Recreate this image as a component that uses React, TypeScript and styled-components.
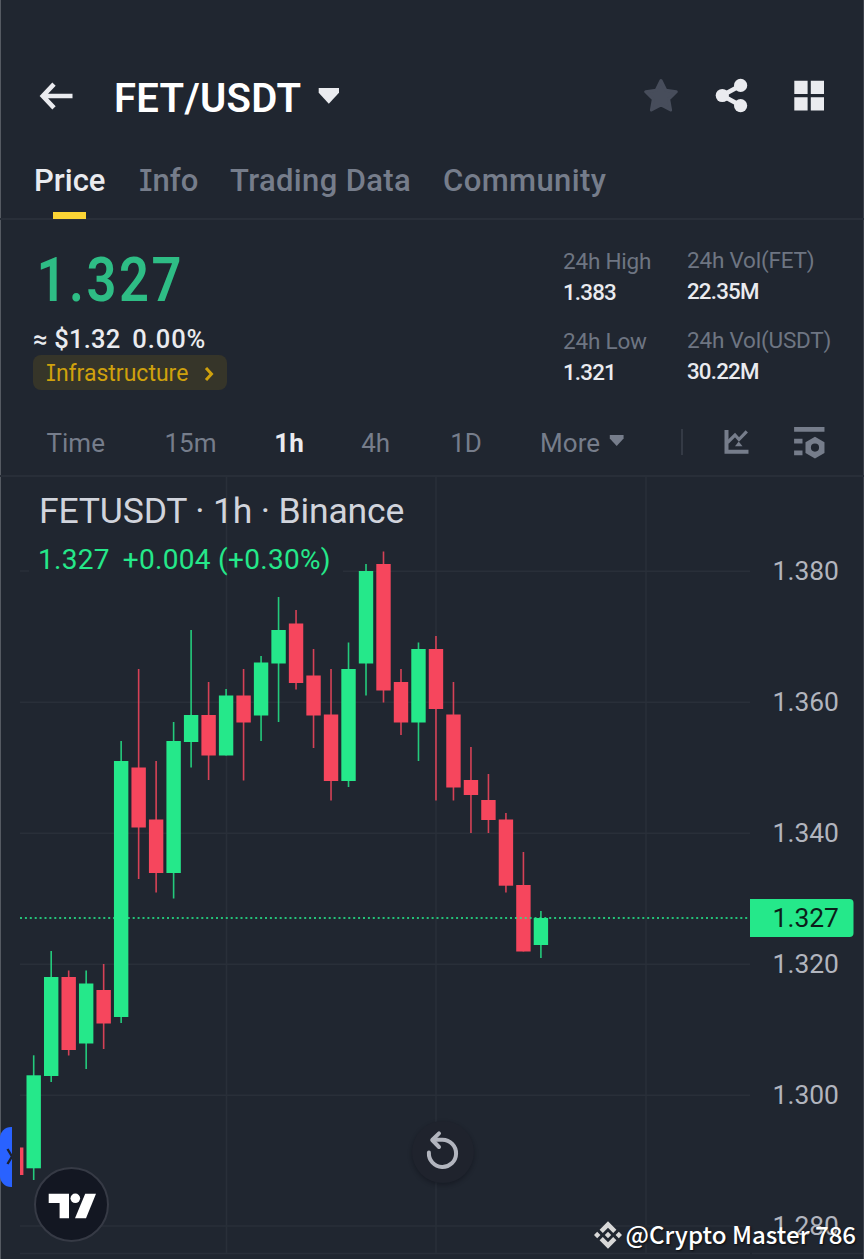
import React from 'react';
import styled, { createGlobalStyle } from 'styled-components';

const BG = '#202630';
const GREEN = '#25e88a';
const RED = '#f6465d';
const LIGHT = '#eaebef';
const MUTED = '#767d8b';
const LINE = '#292f39';

const GlobalStyle = createGlobalStyle`
  * { box-sizing: border-box; }
  body { margin: 0; background: ${BG}; }
`;

const Screen = styled.main`
  width: 864px;
  height: 1259px;
  overflow: hidden;
  display: flex;
  flex-direction: column;
  background: ${BG};
  box-shadow: inset 1px 0 #555a62, inset -1px 0 #3d424b;
  font-family: Roboto, 'Liberation Sans', sans-serif;
  white-space: nowrap;
`;

const TopBar = styled.header`
  display: flex;
  align-items: center;
  height: 125px;
  padding: 66px 39px 0 39px;
`;

const Title = styled.h1`
  margin: 6px 17px 0 40px;
  font-size: 40px;
  line-height: 48px;
  font-weight: 600;
  letter-spacing: 0.3px;
  color: #fff;
`;

const Actions = styled.div`
  display: flex;
  gap: 36px;
  margin-left: auto;
`;

const Tabs = styled.nav`
  display: flex;
  height: 95px;
  padding-left: 34px;
  border-bottom: 2px solid ${LINE};
`;

const Tab = styled.a<{ $active?: boolean; $width: number; $spacing?: number }>`
  display: flex;
  flex-direction: column;
  justify-content: space-between;
  width: ${p => p.$width}px;
  padding-top: 37px;
  font-size: 31px;
  line-height: 38px;
  font-weight: 500;
  letter-spacing: ${p => p.$spacing ?? 0}px;
  color: ${p => (p.$active ? LIGHT : MUTED)};
`;

const Underline = styled.span`
  width: 33px;
  height: 7px;
  margin: 0 0 -1px 19px;
  background: #fcd535;
`;

const SerifI = styled.span<{ $size: number }>`
  font-family: Inter, sans-serif;
  font-feature-settings: 'cv08' 1;
  font-size: ${p => p.$size}px;
  line-height: 1px;
`;

const Summary = styled.section`
  display: flex;
  height: 180px;
  padding-left: 33px;
`;

const Quote = styled.div`
  width: 530px;
  padding-top: 29px;
`;

const LastPrice = styled.div`
  width: 170px;
  padding-left: 4px;
  transform: scaleX(0.86);
  transform-origin: left;
  font-size: 61px;
  line-height: 62px;
  font-weight: 600;
  letter-spacing: 3px;
  color: #2ebd85;
`;

const FiatRow = styled.div`
  display: flex;
  gap: 12px;
  height: 30px;
  margin-top: 13px;
  font-size: 25.5px;
  line-height: 30px;
  font-weight: 500;
  letter-spacing: 0.2px;
  color: ${LIGHT};

  span + span { letter-spacing: 0.9px; }
`;

const Chip = styled.button`
  display: flex;
  align-items: center;
  gap: 16px;
  width: 194px;
  height: 35px;
  margin-top: 1px;
  padding: 2px 0 0 13px;
  border: 0;
  border-radius: 8px;
  background: #363529;
  color: #cfa10d;
  font: 400 23px/34px Roboto, sans-serif;
`;

const StatColumn = styled.dl<{ $width: number; $top: number }>`
  width: ${p => p.$width}px;
  margin: 0;
  padding-top: ${p => p.$top}px;
`;

const StatLabel = styled.dt`
  font-size: 22.5px;
  line-height: 30px;
  letter-spacing: -0.2px;
  color: #6e7582;
`;

const StatValue = styled.dd`
  margin: 0 0 18px;
  font-size: 22.3px;
  line-height: 32px;
  font-weight: 500;
  letter-spacing: -0.8px;
  color: ${LIGHT};
`;

const Intervals = styled.div`
  display: flex;
  align-items: center;
  height: 77px;
  padding: 11px 38px 0 46.5px;
  border-bottom: 2px solid #282e38;
`;

const Interval = styled.span<{ $width: number; $active?: boolean }>`
  width: ${p => p.$width}px;
  font-size: 26px;
  line-height: 32px;
  font-weight: ${p => (p.$active ? 700 : 400)};
  color: ${p => (p.$active ? LIGHT : MUTED)};
`;

const Divider = styled.i`
  width: 2px;
  height: 26px;
  margin: -3px 41px 0 56px;
  background: #343a45;
`;

const ChartArea = styled.section`
  position: relative;
  height: 782px;
`;

const Plot = styled.svg`
  display: block;
`;

const Legend = styled.div`
  position: absolute;
  left: 39px;
  top: 13px;
`;

const LegendTitle = styled.div`
  font-size: 35.6px;
  line-height: 42px;
  letter-spacing: -0.2px;
  color: #d1d4dc;
`;

const LegendValues = styled.div`
  display: flex;
  gap: 13px;
  margin: 11px 0 0 -1px;
  font-size: 28px;
  line-height: 34px;
  letter-spacing: 0.3px;
  color: ${GREEN};
`;

const DrawerHandle = styled.div`
  position: absolute;
  left: 0;
  top: 650px;
  width: 12px;
  height: 60px;
  overflow: hidden;
  border-radius: 11px 0 0 11px;
  background: #2962ff;
`;

const RoundBadge = styled.div`
  position: absolute;
  left: 34px;
  top: 690px;
  width: 75px;
  height: 75px;
  border: 2.5px solid #363a45;
  border-radius: 50%;
  background: #131722;
`;

const ResetButton = styled.div`
  position: absolute;
  left: 412px;
  top: 644px;
  width: 62px;
  height: 62px;
  border-radius: 50%;
  background: #1f232d;
  box-shadow: 0 2px 4px rgba(10, 12, 20, 0.4);
`;

const Signature = styled.div`
  position: absolute;
  left: 594px;
  top: 740px;
  display: flex;
  align-items: center;
  gap: 4px;
  font: 500 24.1px/36px 'Noto Sans CJK SC', sans-serif;
  color: #fff;
  text-shadow: 1px 1px 2px rgba(0, 0, 0, 0.7);

  span { margin: -1px 0 0 -0.5px; }
`;

type Candle = [up: number, top: number, bottom: number, high: number, low: number];

const candles: Candle[] = [
  [1, 1075.3, 1168.3, 1055.3, 1180],
  [1, 977, 1076, 951, 1082],
  [0, 977, 1050, 970.5, 1055.5],
  [1, 983.5, 1043.5, 970.5, 1069],
  [0, 990, 1023.5, 964, 1049],
  [1, 761, 1017, 741, 1023],
  [0, 767.5, 827.5, 669, 879],
  [0, 819.5, 873, 761, 892.5],
  [1, 741, 873, 722, 898.5],
  [1, 715, 742, 630, 767.5],
  [0, 715, 755.5, 682, 780],
  [1, 695.5, 755.5, 689, 755.5],
  [0, 695.5, 722.5, 669, 780.5],
  [1, 662.5, 715.5, 656, 741],
  [1, 630, 663.5, 597, 722],
  [0, 623.5, 683, 610, 689.5],
  [0, 675.5, 715.5, 649, 748],
  [0, 714.5, 781, 669, 800.5],
  [1, 669, 781, 642.5, 787],
  [1, 571, 663.5, 564, 695.5],
  [0, 564, 690.5, 551.5, 702.5],
  [0, 682, 722.5, 669, 735],
  [1, 649, 722.5, 642.5, 761],
  [0, 649, 709, 636, 800.5],
  [0, 714.5, 787.5, 682, 800.5],
  [0, 780, 795, 747, 833],
  [0, 800, 820, 774, 833],
  [0, 819.5, 885.7, 813, 892.5],
  [0, 885, 951.5, 852, 951.5],
  [1, 918, 945, 911, 958],
];

const priceLevels: [string, number][] = [
  ['1.380', 571.3],
  ['1.360', 702.2],
  ['1.340', 833.3],
  ['1.320', 964.3],
  ['1.300', 1095.3],
  ['1.280', 1226],
];

const CandleChart = () => (
  <Plot width="864" height="782" viewBox="0 477 864 782">
    <g stroke={LINE} strokeWidth="1.6">
      {[226.5, 436, 646].map(x => (
        <line key={x} x1={x} x2={x} y1="477" y2="1253" />
      ))}
      {priceLevels.map(([label, y], i) => (
        <line key={label} x1={i === 0 ? 343 : 20} x2="750" y1={y} y2={y} />
      ))}
      <line x1="20" x2="29" y1="571" y2="571" />
      <path d="M20 1253.5H750M752 1253.5H863" />
    </g>
    <rect x="20" y="1147.5" width="3.4" height="27.5" fill={RED} />
    {candles.map(([up, top, bottom, high, low], i) => {
      const x = 33.7 + i * 17.49;
      const color = up ? GREEN : RED;
      return (
        <g key={i} fill={color}>
          <rect x={x - 0.8} y={high} width="1.6" height={low - high} opacity="0.85" />
          <rect x={x - 7.2} y={top} width="14.4" height={bottom - top} />
        </g>
      );
    })}
    <line x1="20" x2="750" y1="918" y2="918" stroke={GREEN} strokeWidth="1.8" strokeDasharray="2 2.9" opacity="0.8" />
    <g fontFamily="Roboto, sans-serif" fontSize="26.4" fill="#b2b5be">
      {priceLevels.map(([label, y]) => (
        <text key={label} x="772.6" y={y + 9}>{label}</text>
      ))}
      <path d="M750 899H849.5A4 4 0 0 1 853.5 903V933A4 4 0 0 1 849.5 937H750Z" fill={GREEN} />
      <text x="772.6" y="927.2" fill="#0b1f1a">1.327</text>
    </g>
  </Plot>
);

export default function App() {
  return (
    <Screen>
      <GlobalStyle />
      <TopBar>
        <svg width="35" height="30" viewBox="39 80.5 35 30" fill="none" stroke={LIGHT} strokeWidth="4.6">
          <path d="M72.5 95.5H43M54 83.7L42.8 95.5L54 107.3" />
        </svg>
        <Title>FET/USDT</Title>
        <svg width="22" height="18" viewBox="318 87 22 18" fill={LIGHT}>
          <path d="M318.7 88H339V92.8L328.8 103.8L318.7 92.8Z" />
        </svg>
        <Actions>
          <svg width="35" height="36" viewBox="644 78 35 36" fill="#474d5b" stroke="#474d5b" strokeWidth="3" strokeLinejoin="round">
            <path d="M661 80.5L665.8 90.2L676.3 91.8L668.7 99.2L670.6 110L661 105L651.4 110L653.3 99.2L645.7 91.8L656.2 90.2Z" />
          </svg>
          <svg width="34" height="36" viewBox="715 78 34 36" fill={LIGHT} stroke="none">
            <path d="M740.5 85.5L722.3 95.5L740.5 105.5" fill="none" stroke={LIGHT} strokeWidth="4.6" />
            <circle cx="722.3" cy="95.5" r="6.6" />
            <circle cx="740.6" cy="85.4" r="6.6" />
            <circle cx="740.6" cy="105.7" r="6.6" />
          </svg>
          <svg width="40" height="36" viewBox="785 78 40 36" fill={LIGHT}>
            <path d="M794.3 80.7H807.6V94H794.3ZM810.8 80.7H824V94H810.8ZM794.3 97.2H807.6V110.6H794.3ZM810.8 97.2H824V110.6H810.8Z" />
          </svg>
        </Actions>
      </TopBar>

      <Tabs>
        <Tab $active $width={105}>Price<Underline /></Tab>
        <Tab $width={91}><span><SerifI $size={30}>I</SerifI>nfo</span></Tab>
        <Tab $width={213} $spacing={0.35}>Trading Data</Tab>
        <Tab $width={170} $spacing={0.4}>Community</Tab>
      </Tabs>

      <Summary>
        <Quote>
          <LastPrice>1.327</LastPrice>
          <FiatRow><span>≈ $1.32</span><span>0.00%</span></FiatRow>
          <Chip>
            <span><SerifI $size={22.5}>I</SerifI>nfrastructure</span>
            <svg width="10" height="16" viewBox="0 0 10 16" fill="none" stroke="#cfa10d" strokeWidth="3">
              <path d="M2 2L7.5 8L2 14" />
            </svg>
          </Chip>
        </Quote>
        <StatColumn $width={124} $top={26}>
          <StatLabel>24h High</StatLabel>
          <StatValue>1.383</StatValue>
          <StatLabel>24h Low</StatLabel>
          <StatValue>1.321</StatValue>
        </StatColumn>
        <StatColumn $width={170} $top={25}>
          <StatLabel>24h Vol(FET)</StatLabel>
          <StatValue>22.35M</StatValue>
          <StatLabel>24h Vol(USDT)</StatLabel>
          <StatValue>30.22M</StatValue>
        </StatColumn>
      </Summary>

      <Intervals>
        <Interval $width={118}>Time</Interval>
        <Interval $width={110}>15m</Interval>
        <Interval $width={87} $active>1h</Interval>
        <Interval $width={89}>4h</Interval>
        <Interval $width={90}>1D</Interval>
        <Interval $width={69}>More</Interval>
        <svg width="16" height="14" viewBox="609 434 16 14" fill={MUTED} style={{ marginTop: -4 }}>
          <path d="M609.8 435H623.6V438.4L616.7 446L609.8 438.4Z" />
        </svg>
        <Divider />
        <svg width="26" height="26" viewBox="723.5 428 26 26" fill="none" stroke={MUTED} strokeWidth="4" style={{ marginTop: -3 }}>
          <path d="M726 429V450.8H748" />
          <path d="M727 441.5L734.5 434L738.5 438.5L746.3 430.3" strokeWidth="3.2" />
          <path d="M734.5 445.2L738.2 440.5L742 445.2Z" fill={MUTED} stroke="none" />
        </svg>
        <svg width="32" height="34" viewBox="793.5 425.5 32 34" fill={MUTED} style={{ marginLeft: 44, marginTop: -1 }}>
          <path d="M793.6 426.5H824V431.3H793.6ZM793.6 438.2H802V443H793.6ZM793.6 450H802V454.8H793.6Z" />
          <path fillRule="evenodd" d="M814.5 436.2L824 441.8V452.4L814.5 458L805 452.4V441.8ZM814.5 443A4.1 4.1 0 1 0 814.5 451.2A4.1 4.1 0 1 0 814.5 443Z" />
        </svg>
      </Intervals>

      <ChartArea>
        <CandleChart />
        <Legend>
          <LegendTitle>FETUSDT · 1h · Binance</LegendTitle>
          <LegendValues><span>1.327</span><span>+0.004 (+0.30%)</span></LegendValues>
        </Legend>
        <DrawerHandle>
          <svg width="12" height="60" viewBox="0 0 12 60" fill="none" stroke="#1b2130" strokeWidth="2.4">
            <path d="M7.5 22L12 29.5L7.5 37" />
          </svg>
        </DrawerHandle>
        <RoundBadge>
          <svg width="70" height="70" viewBox="36 1169 70 70" fill="#fff">
            <path d="M48.7 1193.7H69V1218.2H59.6V1203H48.7Z" />
            <circle cx="75.3" cy="1198.3" r="4.8" />
            <path d="M85.2 1193.7H96L86 1218.2H75Z" />
          </svg>
        </RoundBadge>
        <ResetButton>
          <svg width="62" height="62" viewBox="412 1121 62 62" fill="none" stroke="#b2b5be" strokeWidth="4" strokeLinecap="round">
            <path d="M428.9 1152.6A13.6 13.6 0 1 0 442.5 1139.8H433" />
            <path d="M439 1133.3L432.2 1140L439 1147" strokeLinejoin="round" />
          </svg>
        </ResetButton>
        <Signature>
          <svg width="28" height="28" viewBox="0 0 28 28" fill="#d8d8d8">
            <path d="M14 .3L22.4 8.7L19.2 11.9L14 6.7L8.8 11.9L5.6 8.7ZM14 27.7L5.6 19.3L8.8 16.1L14 21.3L19.2 16.1L22.4 19.3ZM3.2 10.8L6.4 14L3.2 17.2L0 14ZM24.8 10.8L28 14L24.8 17.2L21.6 14ZM14 10.8L17.2 14L14 17.2L10.8 14Z" />
          </svg>
          <span>@Crypto Master 786</span>
        </Signature>
      </ChartArea>
    </Screen>
  );
}
